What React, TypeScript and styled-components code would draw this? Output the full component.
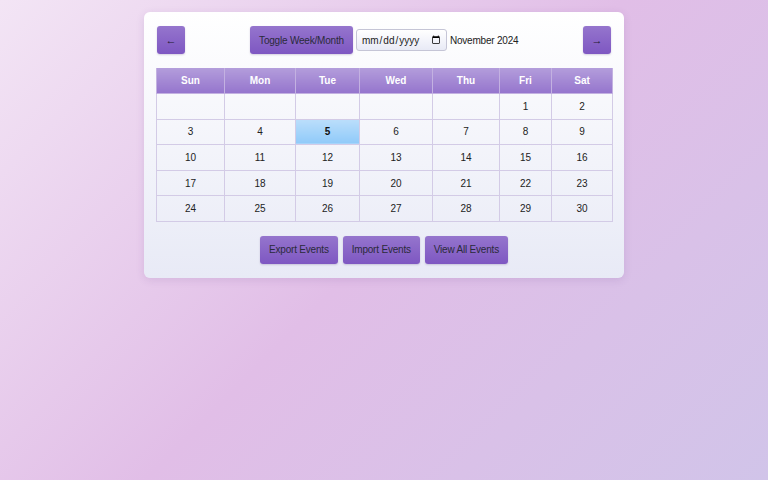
import React from 'react';
import styled, { createGlobalStyle } from 'styled-components';

const GlobalStyle = createGlobalStyle`
  html, body {
    margin: 0;
    padding: 0;
  }
  body {
    min-height: 480px;
    font-family: "Liberation Sans", Arial, sans-serif;
    background: linear-gradient(135deg, #f3e5f5 0%, #e1bee7 50%, #d1c4e9 100%);
    background-attachment: fixed;
  }
`;

const Page = styled.div`
  display: flex;
  justify-content: center;
  padding-top: 12px;
`;

const Card = styled.div`
  width: 480px;
  box-sizing: border-box;
  padding: 13px 13px 14px;
  border-radius: 6px;
  background: linear-gradient(180deg, #ffffff 0%, #e8eaf6 100%);
  box-shadow: 0 2px 8px rgba(80, 40, 120, 0.12);
`;

const Toolbar = styled.div`
  display: flex;
  align-items: center;
  justify-content: space-between;
  height: 28px;
  margin-top: 1px;
`;

const CenterGroup = styled.div`
  display: flex;
  align-items: center;
  gap: 3px;
`;

const PurpleButton = styled.button<{ $square?: boolean }>`
  height: 28px;
  ${({ $square }) =>
    $square ? 'width: 28px; padding: 0; font-size: 11px; color: #1e1a2e;' : 'padding: 0 9px; font-size: 10px; color: #2a2a3a;'}
  border: none;
  border-radius: 3px;
  background: linear-gradient(180deg, #9575cd 0%, #7e57c2 100%);
  font-family: "Liberation Sans", Arial, sans-serif;
  letter-spacing: -0.2px;
  white-space: nowrap;
  cursor: pointer;
  box-shadow: 0 1px 2px rgba(60, 30, 100, 0.2);
`;

const DateInput = styled.input`
  width: 91px;
  height: 22px;
  box-sizing: border-box;
  padding: 0 3px 0 4px;
  border: 1px solid #c5c5d6;
  border-radius: 3px;
  background: linear-gradient(180deg, #ffffff 0%, #e8eaf6 100%);
  font-family: "Liberation Sans", Arial, sans-serif;
  font-size: 10px;
  color: #222;
`;

const MonthLabel = styled.span`
  width: 68px;
  font-size: 10px;
  color: #222;
  white-space: nowrap;
  letter-spacing: -0.2px;
`;

const Table = styled.table`
  margin: 14px -1px 0;
  width: 456px;
  border-collapse: collapse;
  table-layout: fixed;
`;

const HeadCell = styled.th`
  height: 25px;
  padding: 0;
  background: linear-gradient(180deg, #b39ddb 0%, #9575cd 100%);
  color: #ffffff;
  font-size: 10px;
  font-weight: bold;
  border: 1px solid #c3b1e1;
  border-top: none;
`;

const DayCell = styled.td<{ $today?: boolean }>`
  height: 24.6px;
  padding: 0;
  text-align: center;
  font-size: 10px;
  color: #222;
  border: 1px solid #d3cbe6;
  ${({ $today }) =>
    $today
      ? 'background: linear-gradient(180deg, #bbdefb 0%, #90caf9 100%); font-weight: bold; color: #111;'
      : 'background: transparent;'}
`;

const Actions = styled.div`
  display: flex;
  justify-content: center;
  gap: 5px;
  margin-top: 14px;
`;

const days = ['Sun', 'Mon', 'Tue', 'Wed', 'Thu', 'Fri', 'Sat'];
const widths = [68, 71, 64, 73, 67, 52, 61];

const weeks: (number | null)[][] = [
  [null, null, null, null, null, 1, 2],
  [3, 4, 5, 6, 7, 8, 9],
  [10, 11, 12, 13, 14, 15, 16],
  [17, 18, 19, 20, 21, 22, 23],
  [24, 25, 26, 27, 28, 29, 30],
];

export default function App() {
  return (
    <>
      <GlobalStyle />
      <Page>
        <Card>
          <Toolbar>
            <PurpleButton $square>←</PurpleButton>
            <CenterGroup>
              <PurpleButton>Toggle Week/Month</PurpleButton>
              <DateInput type="date" />
              <MonthLabel>November 2024</MonthLabel>
            </CenterGroup>
            <PurpleButton $square>→</PurpleButton>
          </Toolbar>
          <Table>
            <colgroup>
              {widths.map((w, i) => (
                <col key={i} style={{ width: w }} />
              ))}
            </colgroup>
            <thead>
              <tr>
                {days.map((d) => (
                  <HeadCell key={d}>{d}</HeadCell>
                ))}
              </tr>
            </thead>
            <tbody>
              {weeks.map((week, wi) => (
                <tr key={wi}>
                  {week.map((day, di) => (
                    <DayCell key={di} $today={day === 5}>
                      {day ?? ''}
                    </DayCell>
                  ))}
                </tr>
              ))}
            </tbody>
          </Table>
          <Actions>
            <PurpleButton>Export Events</PurpleButton>
            <PurpleButton>Import Events</PurpleButton>
            <PurpleButton>View All Events</PurpleButton>
          </Actions>
        </Card>
      </Page>
    </>
  );
}
